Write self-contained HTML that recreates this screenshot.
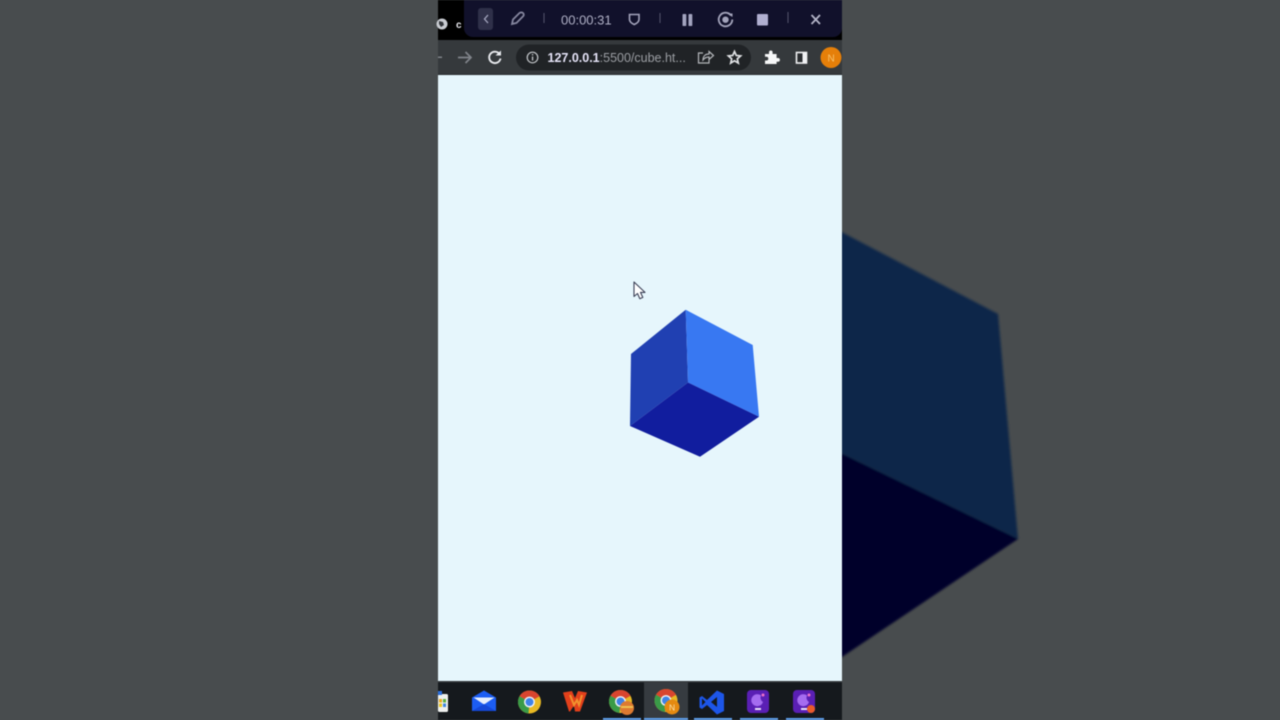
<!DOCTYPE html>
<html><head><meta charset="utf-8"><style>
html,body{margin:0;padding:0;background:#484c4e;width:1280px;height:720px;overflow:hidden}
svg{position:absolute;left:0;top:0;filter:blur(.45px)}
text{font-family:"Liberation Sans",sans-serif}
</style></head><body>
<svg width="1280" height="720" viewBox="0 0 1280 720" xmlns="http://www.w3.org/2000/svg">
<defs><filter id="b" x="-5%" y="-5%" width="110%" height="110%"><feGaussianBlur stdDeviation="1"/></filter></defs>
<rect width="1280" height="720" fill="#484c4e"/>
<!-- blurred bg cube -->
<g filter="url(#b)">
<polygon points="830,226 998,314 1018,539 830,448" fill="#10274a"/>
<polygon points="830,448 1018,539 830,665" fill="#02052b"/>
</g>
<rect x="0" y="0" width="438" height="720" fill="#484c4e"/>
<!-- page -->
<rect x="438" y="0" width="404" height="720" fill="#e6f6fc"/>
<!-- top black tab strip -->
<rect x="438" y="0" width="404" height="40" fill="#000000"/>
<rect x="438" y="40" width="404" height="35" fill="#35393c"/>
<rect x="438" y="74" width="404" height="1" fill="#2a2d30"/>
<!-- tab fragments -->
<circle cx="442" cy="24" r="5.500" fill="#c9ccd2"/>
<path d="M439 21l4 1 1 3-3 2-2-3z" fill="#33363b"/>
<text x="456" y="28" font-size="10" font-weight="700" fill="#e8e8ee">c</text>
<!-- recorder bar -->
<rect x="464" y="-8" width="378" height="45" rx="9" fill="#11112b"/>
<rect x="478" y="8" width="15" height="22" rx="3" fill="#2f3049"/>
<path d="M488 15l-3.500 4 3.500 4" fill="none" stroke="#a6a8c0" stroke-width="1.300"/>
<path d="M512 24l1-4.500 6.500-6.500c1-.9 2.800-.7 3.700.2.800.9.800 2.200-.1 3.100l-6.600 6.600z" fill="none" stroke="#85869e" stroke-width="1.800"/>
<rect x="543.500" y="13" width="1" height="10" fill="#54556c"/>
<text x="561" y="24.500" font-size="13" fill="#b0b1c6">00:00:31</text>
<path d="M629.500 14.500h9.500v5c0 2.500-2.500 4-4.750 5-2.250-1-4.750-2.500-4.750-5z" fill="none" stroke="#a3a4bb" stroke-width="1.600"/>
<rect x="659.500" y="13" width="1" height="10" fill="#54556c"/>
<rect x="682.500" y="14" width="3.800" height="12" rx=".8" fill="#a3a4bf"/>
<rect x="688.500" y="14" width="3.800" height="12" rx=".8" fill="#a3a4bf"/>
<path d="M731 15.500a6.800 6.800 0 1 0 1.300 4" fill="none" stroke="#a3a4bb" stroke-width="1.800"/>
<path d="M727 13.500h5.500v3.500z" fill="#a3a4bb"/>
<circle cx="725.500" cy="19.700" r="3.200" fill="#a3a4bb"/>
<rect x="757" y="14" width="11" height="11.500" rx="1" fill="#b0afd0"/>
<rect x="787.500" y="12" width="1" height="11" fill="#54556c"/>
<path d="M811.500 15l8.500 9M820 15l-8.500 9" stroke="#b4b5c8" stroke-width="1.800" fill="none"/>
<!-- nav -->
<rect x="438" y="56.500" width="4" height="1.500" fill="#80848a"/>
<path d="M458 57.500h12.500M465.500 52l5.500 5.500-5.500 5.500" fill="none" stroke="#80848a" stroke-width="1.700"/>
<path d="M499.500 54a5.700 5.700 0 1 0 1 4.500" fill="none" stroke="#e8eaee" stroke-width="1.900"/>
<path d="M495.500 55.500h5.500v-5z" fill="#e8eaee"/>
<rect x="516" y="44.500" width="235" height="26" rx="13" fill="#202326"/>
<circle cx="532.500" cy="57.500" r="5.300" fill="none" stroke="#c5c8cc" stroke-width="1.200"/>
<rect x="531.900" y="56.500" width="1.300" height="4" fill="#c5c8cc"/>
<rect x="531.900" y="54" width="1.300" height="1.400" fill="#c5c8cc"/>
<text x="547.500" y="62" font-size="12.500" font-weight="700" fill="#e6e4f8">127.0.0.1<tspan font-weight="400" fill="#9b9ea3">:5500/cube.ht...</tspan></text>
<path d="M703 53h-4.500v10h10.500v-3M703 60c0-4 2.500-6 6-6v-2.500l4.500 4-4.500 4V57c-2.500 0-4.500 1-6 3z" fill="none" stroke="#b4b7bb" stroke-width="1.200"/>
<path d="M734.500 51.500l1.800 4 4.300.4-3.300 2.900 1 4.300-3.800-2.300-3.800 2.300 1-4.300-3.300-2.900 4.300-.4z" fill="none" stroke="#dfe1e4" stroke-width="1.700"/>
<path d="M765 54h4v-1.700a1.800 1.800 0 0 1 3.600 0V54h4v4h1.400a1.900 1.900 0 0 1 0 3.800H776.600V64H765v-3.500h1.400a1.900 1.900 0 0 0 0-3.800H765z" fill="#f6f7f8"/>
<rect x="796.500" y="52.500" width="10" height="10.500" fill="#2a2d30" stroke="#f0f1f3" stroke-width="1.600"/>
<rect x="802.500" y="52" width="4.500" height="11.500" fill="#f0f1f3"/>
<circle cx="831" cy="57.500" r="10.500" fill="#e57f09"/>
<text x="827.500" y="61.500" font-size="10" fill="#f8c26a">N</text>
<!-- cursor -->
<path d="M634 282v14.500l3.500-3 2.300 5.200 3-1.300-2.300-5h4.500z" fill="#fff" stroke="#3a3f55" stroke-width="1.100" stroke-linejoin="round"/>
<!-- cube -->
<polygon points="685.700,309.700 631,354 630,426 688,382.500" fill="#2040b2"/>
<polygon points="685.700,309.700 752.700,345 759,416.700 688,382.500" fill="#3878f2"/>
<polygon points="630,426 688,382.500 759,416.700 700,456.700" fill="#111d9e"/>
<!-- taskbar -->
<rect x="438" y="681" width="404" height="39" fill="#15191d"/>
<rect x="438" y="681" width="404" height="1.500" fill="#33373a"/>
<rect x="644" y="682" width="44" height="38" fill="#363b40"/>
<!-- store icon -->
<rect x="438" y="694" width="10" height="18" rx="1.500" fill="#eef0ee"/>
<rect x="438" y="691" width="4" height="4" fill="#2a6fe0"/>
<rect x="439" y="699" width="3" height="3.500" fill="#e9a81f"/>
<rect x="443" y="699" width="3" height="3.500" fill="#5cb03f"/>
<rect x="439" y="703.500" width="3" height="3.500" fill="#e9c51f"/>
<rect x="443" y="703.500" width="3" height="3.500" fill="#3e86e0"/>
<!-- mail -->
<path d="M472 697.500l12-7 12 7V711h-24z" fill="#1c5df2"/>
<path d="M473.500 697.500h21l-10.500 7z" fill="#e6eefc"/>
<path d="M472 711l12-7 12 7z" fill="#1448d8"/>
<!-- chrome 1 -->
<g transform="translate(529.500 702)">
<circle r="11.500" fill="#e8b923"/>
<path d="M0 0L-10 -5.700A11.500 11.500 0 0 1 10 -5.700z" fill="#d9452f"/>
<path d="M0 0L-10 -5.700A11.500 11.500 0 0 0 -1 11.400z" fill="#3a9b48"/>
<circle r="5.400" fill="#f2f3f6"/><circle r="4" fill="#3f83e8"/>
</g>
<!-- WPS -->
<path d="M563 692.500l9-1.500 3 7 3-7 9 1.500-7 19h-5l-1-6-4 6h-1z" fill="#e2401b"/>
<path d="M570 695l4 10 3-5 2 5 3-10" fill="none" stroke="#f2922e" stroke-width="2"/>
<!-- chrome 2 -->
<g transform="translate(620.500 701.500)">
<circle r="11.500" fill="#e8b923"/>
<path d="M0 0L-10 -5.700A11.500 11.500 0 0 1 10 -5.700z" fill="#d9452f"/>
<path d="M0 0L-10 -5.700A11.500 11.500 0 0 0 -1 11.400z" fill="#3a9b48"/>
<circle r="5.400" fill="#f2f3f6"/><circle r="4" fill="#3f83e8"/>
</g>
<circle cx="627" cy="708" r="7" fill="#dd7a30"/>
<rect x="621" y="706" width="12" height="2" fill="#f0c050"/>
<rect x="603" y="718" width="38" height="2" fill="#5ea0ee"/>
<!-- chrome 3 -->
<g transform="translate(666 700.500)">
<circle r="11.500" fill="#e8b923"/>
<path d="M0 0L-10 -5.700A11.500 11.500 0 0 1 10 -5.700z" fill="#d9452f"/>
<path d="M0 0L-10 -5.700A11.500 11.500 0 0 0 -1 11.400z" fill="#3a9b48"/>
<circle r="5.400" fill="#f2f3f6"/><circle r="4" fill="#3f83e8"/>
</g>
<circle cx="672" cy="707" r="7.500" fill="#e58a10"/>
<text x="669" y="710.500" font-size="8.500" fill="#fbe1a8">N</text>
<rect x="644" y="718" width="44" height="2" fill="#5ea0ee"/>
<!-- VS Code -->
<path d="M717 690.500l7 3.500v17l-7 3.500-10-9.500-5 4-2.500-1.500v-10l2.500-1.500 5 4z" fill="#1d56e8"/>
<path d="M717 697l-6 5 6 5z" fill="#15191d"/>
<path d="M702 698.500v7l3.500-3.500z" fill="#15191d"/>
<rect x="694" y="718" width="38" height="2" fill="#5ea0ee"/>
<!-- purple apps -->
<rect x="747" y="690" width="22" height="23" rx="4" fill="#5a1fb4"/>
<path d="M761 695.500a6 6 0 1 0 2 6.500 5 5 0 0 1-2-6.500z" fill="#a56cf0"/>
<circle cx="763" cy="695" r="1.500" fill="#ee70c8"/>
<rect x="755" y="708" width="6" height="2" fill="#e8e0f8"/>
<rect x="740" y="718" width="38" height="2" fill="#5ea0ee"/>
<rect x="793" y="690" width="22" height="23" rx="4" fill="#5a1fb4"/>
<path d="M807 695.500a6 6 0 1 0 2 6.500 5 5 0 0 1-2-6.500z" fill="#a56cf0"/>
<circle cx="809" cy="695" r="1.500" fill="#ee70c8"/>
<rect x="801" y="708" width="6" height="2" fill="#e8e0f8"/>
<circle cx="811" cy="709" r="4" fill="#ea5a2a"/>
<rect x="786" y="718" width="38" height="2" fill="#5ea0ee"/>
</svg>
</body></html>
